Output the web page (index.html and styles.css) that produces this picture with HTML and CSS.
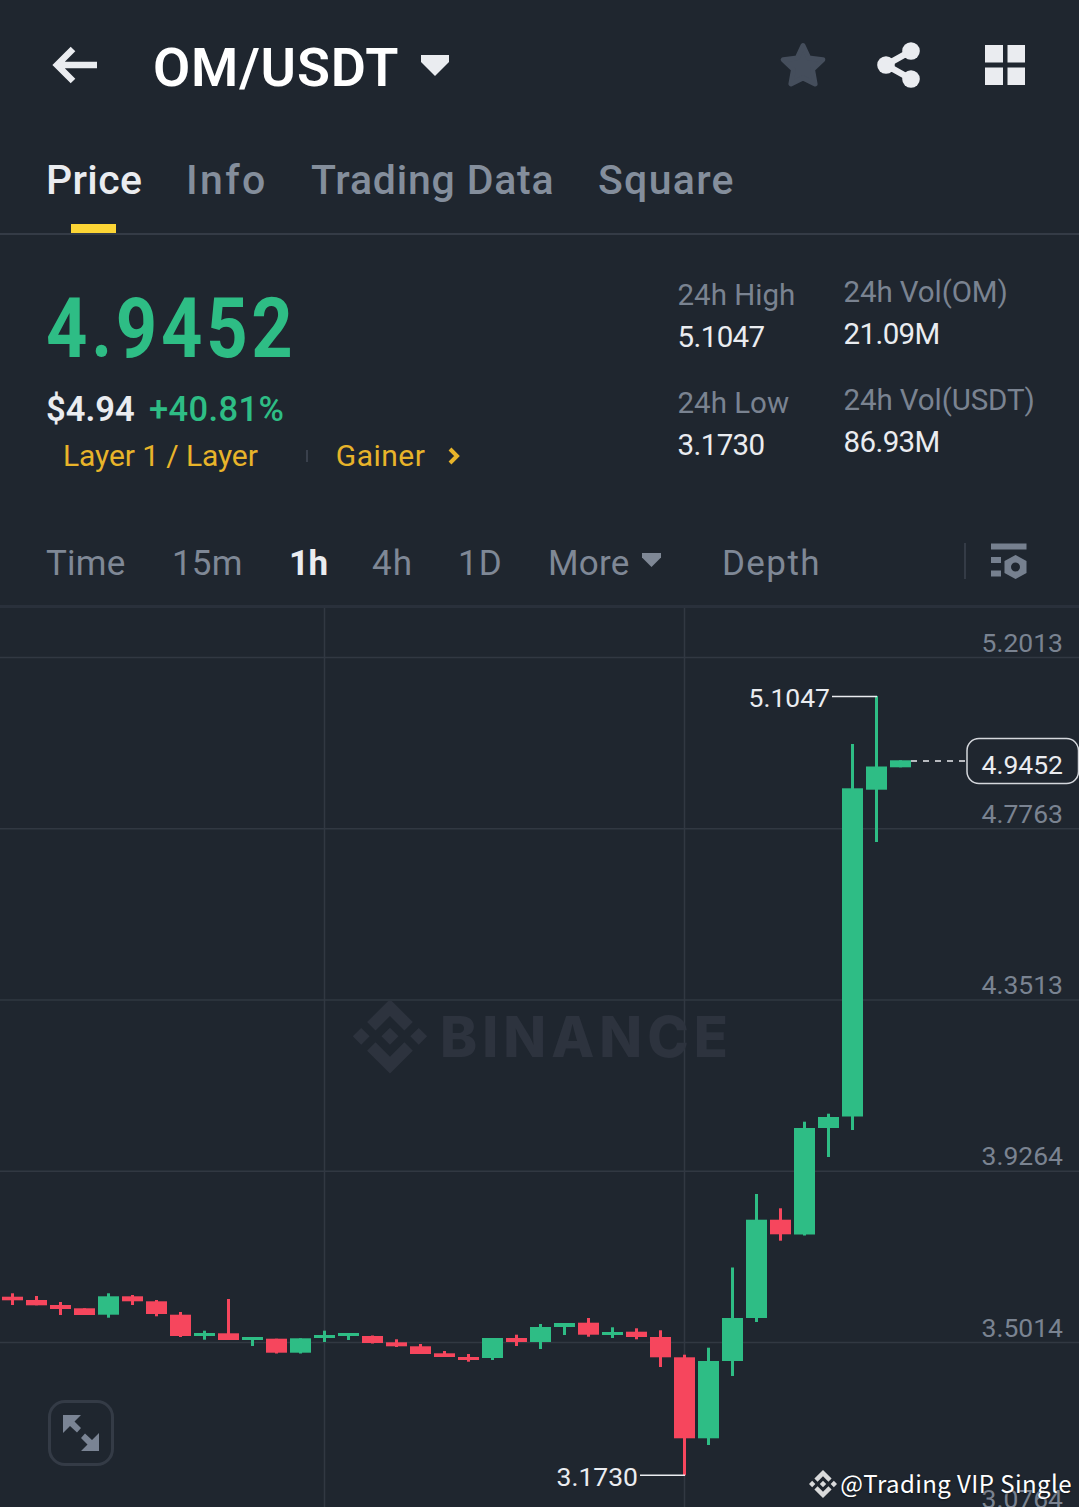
FILE: index.html
```
<!DOCTYPE html>
<html>
  <head>
    <title>OM/USDT</title>
    <meta charset="UTF-8">
    <link rel="stylesheet" href="styles.css">
  </head>
  <body>
    <header class="top">
      <svg class="back" width="46" height="38" viewBox="0 0 46 38"><path d="M45 19H5M21 3L5 19l16 16" fill="none" stroke="currentColor" stroke-width="6.500"/></svg>
      <h1>OM/USDT</h1>
      <svg class="caret" width="28" height="21" viewBox="0 0 28 21"><path d="M0 0h28v7L14 21 0 7z" fill="currentColor"/></svg>
      <svg class="star" width="48" height="48" viewBox="0 0 48 48"><path d="M24 4.500l5.800 12.500 14 1.800-10.300 9.700 2.600 14.500L24 37l-12.100 6 2.600-14.500L4.200 18.800l14-1.800z" fill="currentColor" stroke="currentColor" stroke-width="5" stroke-linejoin="round"/></svg>
      <svg class="share" width="44" height="46" viewBox="0 0 44 46"><path d="M34 9L9 23l25 14" fill="none" stroke="currentColor" stroke-width="6.500"/><circle cx="9" cy="23" r="8.800" fill="currentColor"/><circle cx="34" cy="9" r="8.800" fill="currentColor"/><circle cx="34" cy="37" r="8.800" fill="currentColor"/></svg>
      <svg class="grid" width="40" height="40" viewBox="0 0 40 40"><path d="M0 0h18v17.500H0zM22.500 0H40v17.500H22.500zM0 22.500h18V40H0zM22.500 22.500H40V40H22.500z" fill="currentColor"/></svg>
    </header>

    <nav class="tabs">
      <a class="active">Price</a>
      <a class="info">Info</a>
      <a>Trading Data</a>
      <a class="square">Square</a>
    </nav>

    <section class="summary">
      <div class="price">
        <div class="last">4.9452</div>
        <div class="change"><b>$4.94</b><span>+40.81%</span></div>
        <div class="tags">
          <span class="layer">Layer 1 / Layer</span>
          <i></i>
          <span class="gainer">Gainer</span>
          <svg width="13" height="18" viewBox="0 0 13 18"><path d="M2 2l7 7-7 7" fill="none" stroke="currentColor" stroke-width="4"/></svg>
        </div>
      </div>
      <dl class="range">
        <dt>24h High</dt><dd>5.1047</dd>
        <dt>24h Low</dt><dd>3.1730</dd>
      </dl>
      <dl class="volume">
        <dt>24h Vol(OM)</dt><dd>21.09M</dd>
        <dt>24h Vol(USDT)</dt><dd>86.93M</dd>
      </dl>
    </section>

    <nav class="intervals">
      <a>Time</a>
      <a>15m</a>
      <a class="active">1h</a>
      <a class="wide">4h</a>
      <a class="wide">1D</a>
      <a>More<svg width="19" height="14" viewBox="0 0 19 14"><path d="M0 0h19v4.500L9.500 14 0 4.500z" fill="currentColor"/></svg></a>
      <a class="depth">Depth</a>
      <svg class="settings" width="36" height="36" viewBox="0 0 36 36">
        <path d="M0 .500h35.500v6H0zM0 14h10v6H0zM0 27.500h10v6H0z" fill="currentColor"/>
        <path fill-rule="evenodd" d="M24.500 12l11 6v12l-11 6-11-6V18zm0 7.500a4.500 4.500 0 1 0 0 9 4.500 4.500 0 0 0 0-9z" fill="currentColor"/>
      </svg>
    </nav>

    <main class="chart">
      <svg id="plot" width="1079" height="899" viewBox="0 608 1079 899">
        <g class="lines">
          <path d="M0 657.500h1079M0 828.800h1079M0 1000h1079M0 1171.300h1079M0 1342.600h1079M324.500 608v899M684.500 608v899"/>
        </g>
        <g class="brand">
          <path transform="translate(352.800 999.200) scale(.587)" d="M38.700 53.200L63.300 28.600 87.900 53.200 102.200 38.900 63.300 0 24.400 38.900zM0 63.300L14.300 49l14.300 14.300-14.300 14.300zM38.700 73.400L63.300 98l24.600-24.600 14.300 14.300-38.900 38.900-38.900-38.900zM98 63.300L112.300 49l14.300 14.300-14.300 14.300zM77.800 63.300L63.300 48.800 48.800 63.300l14.500 14.500z"/>
          <text x="440" y="1057" textLength="288">BINANCE</text>
        </g>
        <g class="axis">
          <text x="981.500" y="652">5.2013</text>
          <text x="981.500" y="823">4.7763</text>
          <text x="981.500" y="994">4.3513</text>
          <text x="981.500" y="1165">3.9264</text>
          <text x="981.500" y="1336.500">3.5014</text>
          <text x="981.500" y="1508">3.0764</text>
        </g>
        <g id="candles"></g>
        <g class="marks">
          <path d="M832 696.500h45M640 1475.200h45"/>
          <path d="M911 761h55" stroke-dasharray="6 6"/>
          <rect x="967" y="738.500" width="111.500" height="45" rx="12"/>
          <text x="748.500" y="706.500">5.1047</text>
          <text x="556.500" y="1485.500">3.1730</text>
          <text x="981.500" y="774">4.9452</text>
        </g>
      </svg>
      <button class="expand"><svg width="36" height="36" viewBox="0 0 36 36"><path d="M0 0h18l-6.500 6.500 6.500 6.500-4 4.500L7 11l-7 7zM36 36H18l6.500-6.500L18 23l4-4.500 7 6.500 7-7z" fill="currentColor"/></svg></button>
      <div class="author">
        <svg width="28" height="28" viewBox="0 0 126.600 126.600"><path d="M38.700 53.200L63.300 28.600 87.900 53.200 102.200 38.900 63.300 0 24.400 38.900zM0 63.300L14.300 49l14.300 14.300-14.300 14.300zM38.700 73.400L63.300 98l24.600-24.600 14.300 14.300-38.900 38.900-38.900-38.900zM98 63.300L112.300 49l14.300 14.300-14.300 14.300zM77.800 63.300L63.300 48.800 48.800 63.300l14.500 14.500z" fill="#d9dadb"/></svg>
        <span>@Trading VIP Single</span>
      </div>
    </main>

    <script>
(function() {
  // color, body top, body bottom, wick top, wick bottom
  var candles=[
    ['down',1296.7,1300.3,1293.3,1305],
    ['down',1300,1305.3,1296,1305.3],
    ['down',1305,1309,1302,1315],
    ['down',1308.3,1315,1308.3,1315],
    ['up',1296.3,1314.7,1293.3,1317.7],
    ['down',1296.3,1301.3,1295,1305],
    ['down',1301.3,1314,1300,1316.3],
    ['down',1314.7,1336,1312,1337],
    ['up',1333,1336,1330.7,1339.7],
    ['down',1333.3,1340,1299,1340],
    ['up',1337,1340,1337,1346],
    ['down',1338.7,1352.7,1338.7,1353.5],
    ['up',1338.3,1352.7,1338.3,1353.5],
    ['up',1335,1338,1330.7,1342],
    ['up',1333,1336,1333,1340],
    ['down',1336,1343,1335.5,1343.5],
    ['down',1342.3,1346.3,1339.3,1347],
    ['down',1346.3,1354,1344,1354],
    ['down',1353.3,1357,1351,1357],
    ['down',1357,1360,1354,1361.7],
    ['up',1338,1358,1338,1360],
    ['down',1338,1342,1334.7,1346],
    ['up',1327,1342,1324,1349],
    ['up',1323,1327,1323,1335],
    ['down',1322.7,1334.7,1318,1336.7],
    ['up',1332,1335,1327.3,1338],
    ['down',1331.7,1337,1328.3,1339.3],
    ['down',1337,1357.3,1330.3,1367],
    ['down',1357.3,1438.3,1354.7,1475.3],
    ['up',1361,1438.3,1347.7,1445],
    ['up',1318,1361,1267.5,1376],
    ['up',1219.7,1318,1194,1322],
    ['down',1219.7,1234.3,1208.3,1240.7],
    ['up',1128,1234.5,1121.7,1235.5],
    ['up',1117,1128,1113.7,1157],
    ['up',788.3,1116.5,744,1130],
    ['up',766.5,789.7,696,842],
    ['up',760.3,767.3,760.3,767.3]
  ];
  var s='';
  for (var i=0;i<candles.length;i++) {
    var c=candles[i], x=2+i*24;
    s+='<g class="'+c[0]+'"><rect x="'+x+'" y="'+c[1]+'" width="21" height="'+(c[2]-c[1])+'"/>';
    s+='<rect x="'+(x+9)+'" y="'+c[3]+'" width="3" height="'+(c[4]-c[3])+'"/></g>';
  }
  document.querySelector('#candles').innerHTML=s;
}());
    </script>
  </body>
</html>
```
FILE: styles.css
```
body {
  margin: 0;
  width: 1079px;
  height: 1507px;
  overflow: hidden;
  background: #1f262f;
  color: #eaecf0;
  font-family: Roboto, 'Liberation Sans', sans-serif;
}
svg {
  display: block;
  flex: none;
}
.top {
  display: flex;
  align-items: center;
  height: 130px;
  padding: 0 54px 0 52px;
  box-sizing: border-box;
}
.top h1 {
  margin: 0 0 0 55px;
  padding-top: 5px;
  width: 246px;
  font-size: 54px;
  line-height: 60px;
  font-weight: 600;
  letter-spacing: .85px;
  color: #fff;
}
.caret {
  margin-left: 22px;
}
.star {
  margin-left: auto;
  color: #454e5c;
}
.share {
  margin-left: 50px;
}
.grid {
  margin-left: 64px;
}
.tabs {
  display: grid;
  grid-template-columns: 140px 125px 287px auto;
  height: 105px;
  padding-left: 46px;
  box-sizing: border-box;
  border-bottom: 2px solid #343b46;
  font-size: 41px;
  line-height: 100px;
  font-weight: 500;
  letter-spacing: .8px;
  color: #848e9c;
}
.tabs .active {
  position: relative;
  letter-spacing: .35px;
  color: #eaecf0;
}
.tabs .active:after {
  content: '';
  position: absolute;
  left: 25px;
  bottom: 0;
  width: 45px;
  height: 9px;
  background: #fcd535;
}
.tabs .info {
  letter-spacing: 2.4px;
}
.tabs .square {
  letter-spacing: 1.3px;
}
.summary {
  display: grid;
  grid-template-columns: 631.5px 166px auto;
  height: 287px;
  padding: 39px 0 0 46px;
  box-sizing: border-box;
}
.last {
  margin-top: 13px;
  font-size: 83px;
  line-height: 84px;
  font-weight: 700;
  letter-spacing: 4.3px;
  color: #2ebd85;
  transform: scaleX(.87);
  transform-origin: 0 0;
}
.change {
  display: flex;
  margin-top: 17px;
  font-size: 34.5px;
  line-height: 42px;
  font-weight: 500;
}
.change b {
  width: 103px;
  font-weight: 600;
}
.change span {
  letter-spacing: .4px;
  color: #2ebd85;
}
.tags {
  display: flex;
  align-items: center;
  margin: 8px 0 0 17px;
  font-size: 30px;
  line-height: 36px;
  color: #e8b42a;
}
.tags .layer {
  letter-spacing: -.1px;
}
.tags i {
  width: 2px;
  height: 12px;
  margin: 0 28px 0 48px;
  background: #39404c;
}
.tags .gainer {
  letter-spacing: .5px;
}
.tags svg {
  margin-left: 23px;
}
dl {
  margin: 0;
  font-size: 29.5px;
  line-height: 42px;
}
dt {
  color: #7a8391;
}
dd {
  margin: 0 0 24px;
  letter-spacing: -.6px;
}
.volume {
  margin-top: -3px;
}
.volume dt {
  letter-spacing: -.1px;
}
.intervals {
  display: grid;
  grid-template-columns: 126px 117px 83px 86px 90px 174px 242px auto;
  height: 86px;
  padding-left: 46px;
  box-sizing: border-box;
  border-bottom: 3px solid #29303b;
  font-size: 35px;
  line-height: 84px;
  letter-spacing: .2px;
  color: #7f8896;
}
.intervals .active {
  font-weight: 700;
  letter-spacing: -.5px;
  color: #eaecf0;
}
.intervals .wide {
  letter-spacing: 1px;
}
.intervals .depth {
  letter-spacing: 1.4px;
}
.intervals a svg {
  display: inline-block;
  margin-left: 13px;
  vertical-align: 8px;
}
.settings {
  margin-top: 21px;
  padding-left: 25px;
  border-left: 2px solid #343b46;
  color: #76808f;
}
.chart {
  position: relative;
}
.lines path {
  stroke: #313842;
  stroke-width: 1.5;
}
.brand {
  fill: #2d333e;
  font: 800 56px Inter, sans-serif;
}
.axis {
  fill: #7a8391;
  font-size: 26.5px;
}
.up {
  fill: #2ebd85;
}
.down {
  fill: #f6465d;
}
.marks {
  fill: #eaecf0;
  font-size: 26.5px;
}
.marks path {
  stroke: #eaecf0;
  stroke-width: 1.6;
}
.marks rect {
  fill: none;
  stroke: #d4d7dc;
  stroke-width: 1.5;
}
.expand {
  position: absolute;
  left: 48px;
  top: 792px;
  display: flex;
  align-items: center;
  justify-content: center;
  width: 66px;
  height: 66px;
  padding: 0;
  background: none;
  border: 3px solid #343b46;
  border-radius: 17px;
  color: #7a8494;
}
.author {
  position: absolute;
  right: 7px;
  bottom: 6px;
  display: flex;
  align-items: center;
  gap: 3px;
  font: 400 24px/36px 'Noto Sans CJK SC', sans-serif;
  letter-spacing: .43px;
  color: #fff;
  text-shadow: 0 1px 2px rgba(0,0,0,.5);
}
.author span {
  margin-top: -2px;
}
```
